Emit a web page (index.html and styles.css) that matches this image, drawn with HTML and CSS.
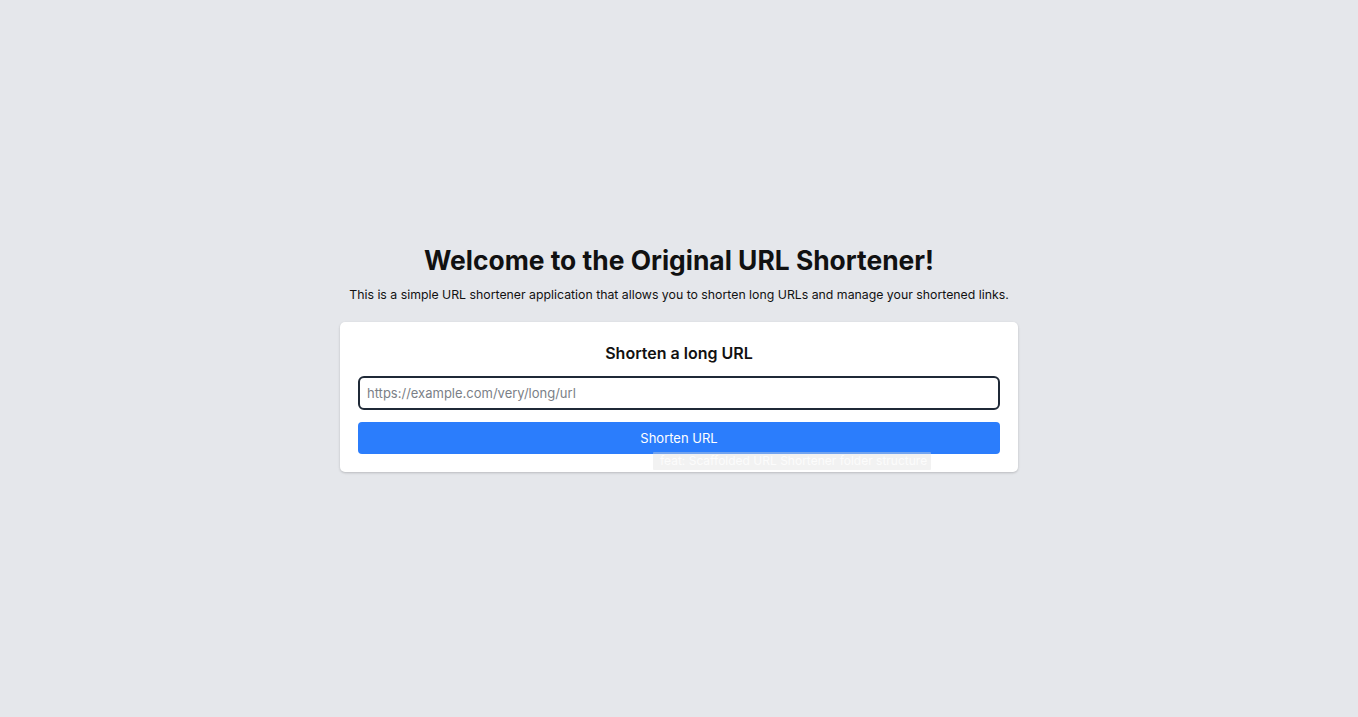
FILE: index.html
```html
<!DOCTYPE html>
<html lang="en">
<head>
<meta charset="utf-8">
<title>URL Shortener</title>
<link rel="stylesheet" href="styles.css">
</head>
<body>
<main class="page">
  <h1 class="title">Welcome to the Original URL Shortener!</h1>
  <p class="lead">This is a simple URL shortener application that allows you to shorten long URLs and manage your shortened links.</p>
  <section class="card">
    <h2 class="card-title">Shorten a long URL</h2>
    <form class="form" onsubmit="return false;">
      <input class="url-input" type="text" placeholder="https://example.com/very/long/url">
      <button class="btn" type="submit">Shorten URL</button>
    </form>
    <div class="ghost">feat: Scaffolded URL Shortener folder structure</div>
  </section>
</main>
</body>
</html>
```
FILE: styles.css
```css
* { box-sizing: border-box; }
html, body { margin: 0; padding: 0; }
body {
  background: #e5e7eb;
  font-family: Inter, "Liberation Sans", sans-serif;
  color: #111827;
}
.page {
  min-height: 717px;
  display: flex;
  flex-direction: column;
  align-items: center;
  justify-content: center;
}
.title {
  margin: 0;
  font-size: 26.4px;
  font-weight: 700;
  line-height: 30px;
  color: #111111;
}
.lead {
  margin: 11px 0 0;
  font-size: 12.3px;
  line-height: 18px;
  color: #111111;
}
.card {
  position: relative;
  width: 678px;
  margin-top: 18px;
  background: #ffffff;
  border-radius: 5px;
  box-shadow: 0 1px 3px rgba(0,0,0,0.12), 0 1px 2px rgba(0,0,0,0.08);
  padding: 20px 18px 18px;
}
.card-title {
  margin: 0;
  text-align: center;
  font-size: 16px;
  font-weight: 600;
  line-height: 22px;
  color: #111111;
}
.form {
  margin-top: 12px;
  display: flex;
  flex-direction: column;
  gap: 12px;
}
.url-input {
  height: 34px;
  width: 100%;
  border: 2px solid #1f2937;
  border-radius: 6px;
  padding: 0 7px;
  font-family: Inter, "Liberation Sans", sans-serif;
  font-size: 13px;
  color: #111827;
  background: #fff;
  outline: none;
}
.url-input::placeholder { color: #7b7f87; }
.btn {
  height: 32px;
  width: 100%;
  border: none;
  border-radius: 4px;
  background: #2b7dfc;
  color: #ffffff;
  font-family: Inter, "Liberation Sans", sans-serif;
  font-size: 13px;
  cursor: pointer;
}
.ghost {
  position: absolute;
  left: 313px;
  top: 130px;
  width: 278px;
  height: 18px;
  background: rgba(222, 222, 222, 0.4);
  color: rgba(255, 255, 255, 0.8);
  font-size: 12px;
  line-height: 18px;
  padding-left: 7px;
  white-space: nowrap;
  overflow: hidden;
  border-radius: 1px;
}
```
